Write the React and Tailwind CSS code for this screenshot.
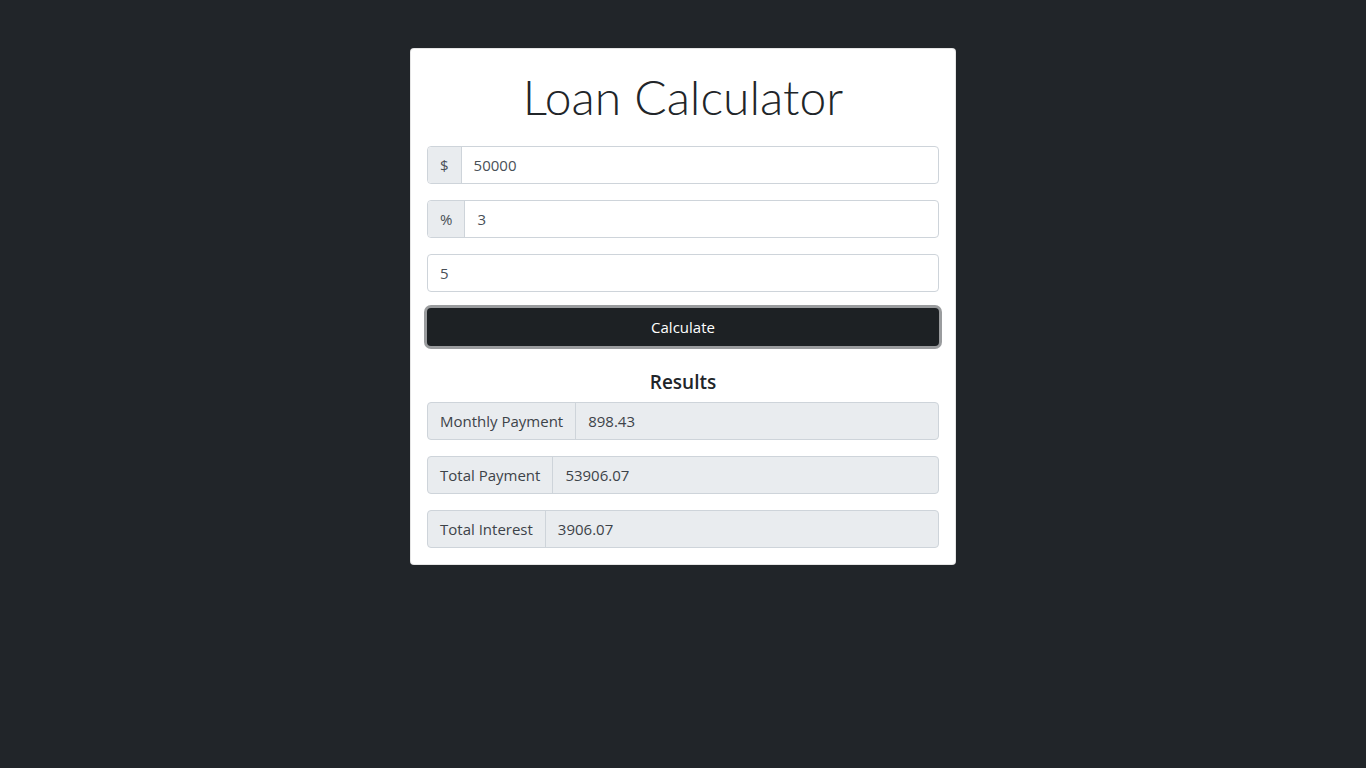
import { useState } from 'react';

const font = { fontFamily: '"Open Sans", "Noto Sans", sans-serif' };

function Field({ addon, value, onChange }) {
  return (
    <div className="flex h-[38px] w-full rounded border border-[#ced4da] bg-white text-[15px] text-[#495057]">
      {addon && (
        <span className="flex items-center border-r border-[#ced4da] bg-[#e9ecef] px-3 rounded-l">{addon}</span>
      )}
      <input
        className="min-w-0 flex-1 bg-transparent px-3 outline-none"
        value={value}
        onChange={(e) => onChange(e.target.value)}
      />
    </div>
  );
}

function ResultRow({ label, value }) {
  return (
    <div className="flex h-[38px] w-full rounded border border-[#ced4da] bg-[#e9ecef] text-[15px] text-[#3d4349]">
      <span className="flex items-center border-r border-[#ced4da] px-3">{label}</span>
      <span className="flex items-center px-3">{value}</span>
    </div>
  );
}

export default function App() {
  const [amount, setAmount] = useState('50000');
  const [interest, setInterest] = useState('3');
  const [years, setYears] = useState('5');

  return (
    <div className="min-h-screen bg-[#212529] pt-12" style={font}>
      <div className="mx-auto w-[546px] rounded border border-black/10 bg-white px-4 pt-4 pb-4">
        {/* Heading */}
        <h1
          className="mb-[14px] h-[67px] text-center text-[48px] font-light leading-[64px] text-[#212529]"
          style={{ fontFamily: 'Lato, "Open Sans", sans-serif' }}
        >
          Loan Calculator
        </h1>

        <form className="flex flex-col gap-4" onSubmit={(e) => e.preventDefault()}>
          <Field addon="$" value={amount} onChange={setAmount} />
          <Field addon="%" value={interest} onChange={setInterest} />
          <Field value={years} onChange={setYears} />
          <button
            type="submit"
            className="h-[38px] w-full rounded bg-[#1d2124] text-[15px] text-white ring-[3px] ring-[#9a9c9e]"
          >
            Calculate
          </button>
        </form>

        {/* Results */}
        <h5 className="mt-[24px] mb-[8px] text-center text-[19px] font-semibold leading-6 text-[#212529]">Results</h5>
        <div className="flex flex-col gap-4">
          <ResultRow label="Monthly Payment" value="898.43" />
          <ResultRow label="Total Payment" value="53906.07" />
          <ResultRow label="Total Interest" value="3906.07" />
        </div>
      </div>
    </div>
  );
}
